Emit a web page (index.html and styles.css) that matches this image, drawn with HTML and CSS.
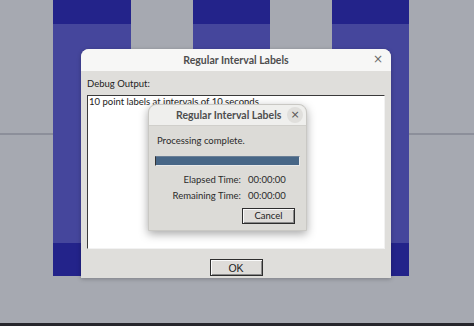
FILE: index.html
```html
<!DOCTYPE html>
<html lang="en">
<head>
<meta charset="UTF-8">
<title>Regular Interval Labels</title>
<link rel="stylesheet" href="styles.css">
</head>
<body>
<div class="desktop">
  <div class="columns">
    <div class="column first"></div>
    <div class="column"></div>
    <div class="column"></div>
  </div>
  <div class="taskbar"></div>

  <!-- main dialog -->
  <div class="dialog mainDialog">
    <div class="titleBar">
      <span class="title">Regular Interval Labels</span>
      <span class="closeX">&times;</span>
    </div>
    <div class="dialogBody">
      <div class="label">Debug Output:</div>
      <div class="output">10 point labels at intervals of 10 seconds</div>
      <div class="buttonRow">
        <button class="button okButton">OK</button>
      </div>
    </div>
  </div>

  <!-- progress dialog on top -->
  <div class="dialog progressDialog">
    <div class="titleBar small">
      <span class="title">Regular Interval Labels</span>
      <span class="closeCircle">&times;</span>
    </div>
    <div class="progressBody">
      <div class="status">Processing complete.</div>
      <div class="progressBar"><div class="progressFill"></div></div>
      <div class="times">
        <span class="timeLabel">Elapsed Time:</span><span class="timeValue">00:00:00</span>
        <span class="timeLabel">Remaining Time:</span><span class="timeValue">00:00:00</span>
      </div>
      <div class="cancelRow">
        <button class="button cancelButton">Cancel</button>
      </div>
    </div>
  </div>
</div>
</body>
</html>
```

FILE: styles.css
```css
body {
  margin: 0;
  padding: 0;
  font-family: Lato, "Noto Sans", sans-serif;
  overflow: hidden;
}

.desktop {
  position: relative;
  width: 474px;
  height: 326px;
  background: linear-gradient(to bottom, #a6a9b1 0, #a6a9b1 133px, #8c8f9a 133px, #8c8f9a 135px, #a6a9b1 135px);
}

.columns {
  display: flex;
  gap: 62px;
  padding-left: 53px;
  height: 276px;
}

.column {
  width: 77px;
  height: 276px;
  background: linear-gradient(to bottom, #23238a 0, #23238a 24px, #45469c 24px, #45469c 243px, #23238a 243px);
}

.column.first {
  width: 78px;
}

.taskbar {
  position: absolute;
  left: 0;
  right: 0;
  bottom: 0;
  height: 3px;
  background-color: #26262c;
}

.dialog {
  position: absolute;
  box-sizing: border-box;
}

.mainDialog {
  left: 81px;
  top: 49px;
  width: 310px;
  height: 229px;
  border-radius: 8px 8px 0 0;
  background-color: #dfdedb;
  box-shadow: 0 1px 4px rgba(0, 0, 0, 0.25);
  display: flex;
  flex-direction: column;
}

.titleBar {
  height: 22px;
  background-color: #f7f7f6;
  border-radius: 8px 8px 0 0;
  display: flex;
  align-items: center;
  justify-content: center;
  position: relative;
  flex-shrink: 0;
}

.title {
  font-size: 10.5px;
  font-weight: 700;
  color: #4e4e4e;
}

.closeX {
  position: absolute;
  right: 8px;
  top: 3px;
  font-family: "DejaVu Sans", sans-serif;
  font-size: 12px;
  color: #6a6a6a;
}

.dialogBody {
  flex: 1;
  padding: 6px 6px 2px 6px;
  display: flex;
  flex-direction: column;
}

.label {
  font-size: 9.5px;
  color: #222;
  height: 18px;
  line-height: 14px;
}

.output {
  height: 154px;
  box-sizing: border-box;
  background-color: #ffffff;
  border-top: 1px solid #3a3a3a;
  border-left: 1px solid #3a3a3a;
  border-right: 1px solid #f2f2f2;
  border-bottom: 1px solid #f2f2f2;
  font-size: 9.5px;
  color: #222;
  line-height: 12px;
  padding: 0 1px;
}

.buttonRow {
  display: flex;
  justify-content: center;
  padding-top: 10px;
}

.button {
  box-sizing: border-box;
  background-color: #dedcd9;
  border: 1px solid #2e2e2e;
  box-shadow: inset 1px 1px 0 #fafafa, inset -1px -1px 0 #8a8a8a;
  font-family: "Liberation Sans", Arial, sans-serif;
  font-size: 10.5px;
  color: #222;
  padding: 0;
}

.okButton {
  width: 53px;
  height: 17px;
}

.progressDialog {
  left: 148px;
  top: 104px;
  width: 159px;
  height: 127px;
  border-radius: 8px 8px 0 0;
  background-color: #dcdbd7;
  border: 1px solid #c9c8c4;
  box-shadow: 0 3px 10px rgba(0, 0, 0, 0.35);
}

.titleBar.small {
  height: 21px;
  background-color: #efefed;
  border-bottom: 1px solid #d0cfcb;
  box-sizing: border-box;
  justify-content: flex-start;
  padding-left: 27px;
}

.closeCircle {
  position: absolute;
  right: 3px;
  top: 2px;
  width: 16px;
  height: 16px;
  border-radius: 50%;
  background-color: #e0dfdc;
  font-family: "DejaVu Sans", sans-serif;
  font-size: 11px;
  line-height: 16px;
  text-align: center;
  color: #555;
}

.progressBody {
  padding: 7px 6px 0 6px;
}

.status {
  font-size: 9.5px;
  color: #2a2a2a;
  padding-left: 2px;
  height: 17px;
  line-height: 16px;
}

.progressBar {
  height: 10px;
  margin-top: 6px;
  box-sizing: border-box;
  border: 1px solid #e8e8e8;
  border-left-color: #333;
  border-top-color: #6a7f96;
  background-color: #476686;
}

.progressFill {
  height: 100%;
}

.times {
  display: grid;
  grid-template-columns: 86px auto;
  column-gap: 7px;
  row-gap: 4px;
  margin-top: 8px;
  font-size: 9.5px;
  color: #2a2a2a;
  line-height: 12px;
}

.timeLabel {
  text-align: right;
}

.cancelRow {
  display: flex;
  justify-content: flex-end;
  padding-right: 5px;
  margin-top: 6px;
}

.cancelButton {
  width: 53px;
  height: 16px;
  font-family: Lato, "Noto Sans", sans-serif;
  font-size: 9.5px;
  line-height: 12px;
}
```
